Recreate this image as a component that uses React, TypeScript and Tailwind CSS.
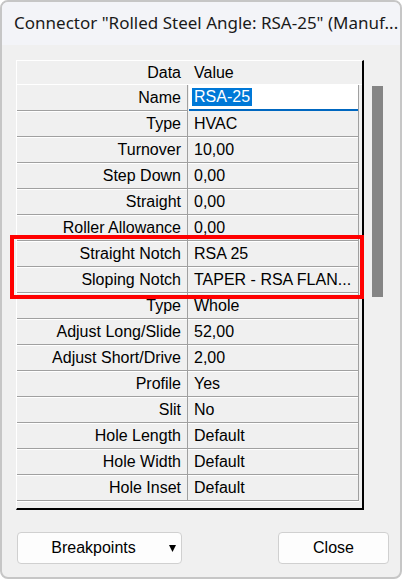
import React from "react";

type Row = { label: string; value: string; editing?: boolean };

const rows: Row[] = [
  { label: "Name", value: "RSA-25", editing: true },
  { label: "Type", value: "HVAC" },
  { label: "Turnover", value: "10,00" },
  { label: "Step Down", value: "0,00" },
  { label: "Straight", value: "0,00" },
  { label: "Roller Allowance", value: "0,00" },
  { label: "Straight Notch", value: "RSA 25" },
  { label: "Sloping Notch", value: "TAPER - RSA FLAN..." },
  { label: "Type", value: "Whole" },
  { label: "Adjust Long/Slide", value: "52,00" },
  { label: "Adjust Short/Drive", value: "2,00" },
  { label: "Profile", value: "Yes" },
  { label: "Slit", value: "No" },
  { label: "Hole Length", value: "Default" },
  { label: "Hole Width", value: "Default" },
  { label: "Hole Inset", value: "Default" },
];

function PropertyRow({ row }: { row: Row }) {
  return (
    <div className="flex h-[26px]">
      <div className="w-[171px] flex items-center justify-end pr-[6px] border-r border-b border-[#a0a0a0] shadow-[0_1px_0_#ffffff]">
        {row.label}
      </div>
      {row.editing ? (
        <div className="w-[171px] flex border-r border-[#a0a0a0]">
          <div className="flex-1 ml-[1px] bg-white border-b-2 border-[#0067c0] flex items-center pl-[3px]">
            <span className="bg-[#0078d7] text-white px-[2px] leading-[18px]">{row.value}</span>
          </div>
        </div>
      ) : (
        <div className="w-[171px] flex items-center pl-[6px] border-r border-b border-[#a0a0a0] shadow-[0_1px_0_#ffffff] whitespace-nowrap overflow-hidden">
          {row.value}
        </div>
      )}
    </div>
  );
}

export default function App() {
  return (
    <div
      className="w-[402px] h-[580px] bg-white text-black"
      style={{ fontFamily: '"Liberation Sans", Arial, sans-serif' }}
    >
      <div className="relative w-[402px] h-[579px] rounded-[8px] border-2 border-[#c6c6c6] bg-[#f0f0f0] flex flex-col overflow-hidden">
        {/* Title bar */}
        <div
          className="h-[43px] bg-[#f3f4f8] flex items-center pl-[12px] pb-[2px] text-[17px] whitespace-nowrap overflow-hidden text-[#1a1a1a]"
          style={{ fontFamily: '"Noto Sans", sans-serif' }}
        >
          Connector "Rolled Steel Angle: RSA-25" (Manuf...
        </div>

        {/* Body */}
        <div className="flex-1 flex flex-col pl-[14px] pt-[15px] text-[16px]">
          <div className="flex">
            <div className="w-[348px] h-[450px] border-t border-l border-white border-r-2 border-b-2 border-r-black border-b-black flex flex-col">
              <div className="h-[24px] flex border-b border-white">
                <div className="w-[171px] flex items-center justify-end pr-[7px]">Data</div>
                <div className="flex items-center pl-[6px]">Value</div>
              </div>
              {rows.map((row, i) => (
                <PropertyRow key={i} row={row} />
              ))}
            </div>
            {/* Scrollbar */}
            <div className="ml-[8px] mt-[26px] w-[11px] h-[211px] bg-[#858585]" />
          </div>

          {/* Buttons */}
          <div className="flex items-center mt-[22px] pl-[1px]">
            <button className="w-[165px] h-[32px] rounded-[4px] border border-[#d0d0d0] bg-[#fdfdfd] flex items-center relative">
              <span className="flex-1 text-center pr-[12px]">Breakpoints</span>
              <svg className="absolute right-[5px] top-[12px]" width="7" height="7" viewBox="0 0 7 7">
                <path d="M0 0H7L3.5 7Z" fill="#000" />
              </svg>
            </button>
            <button className="ml-[96px] w-[111px] h-[32px] rounded-[4px] border border-[#d0d0d0] bg-[#fdfdfd]">
              Close
            </button>
          </div>
        </div>

        {/* Highlight box */}
        <div className="absolute left-[8px] top-[233px] w-[354px] h-[64px] border-4 border-[#ff0000] pointer-events-none" />
      </div>
    </div>
  );
}
